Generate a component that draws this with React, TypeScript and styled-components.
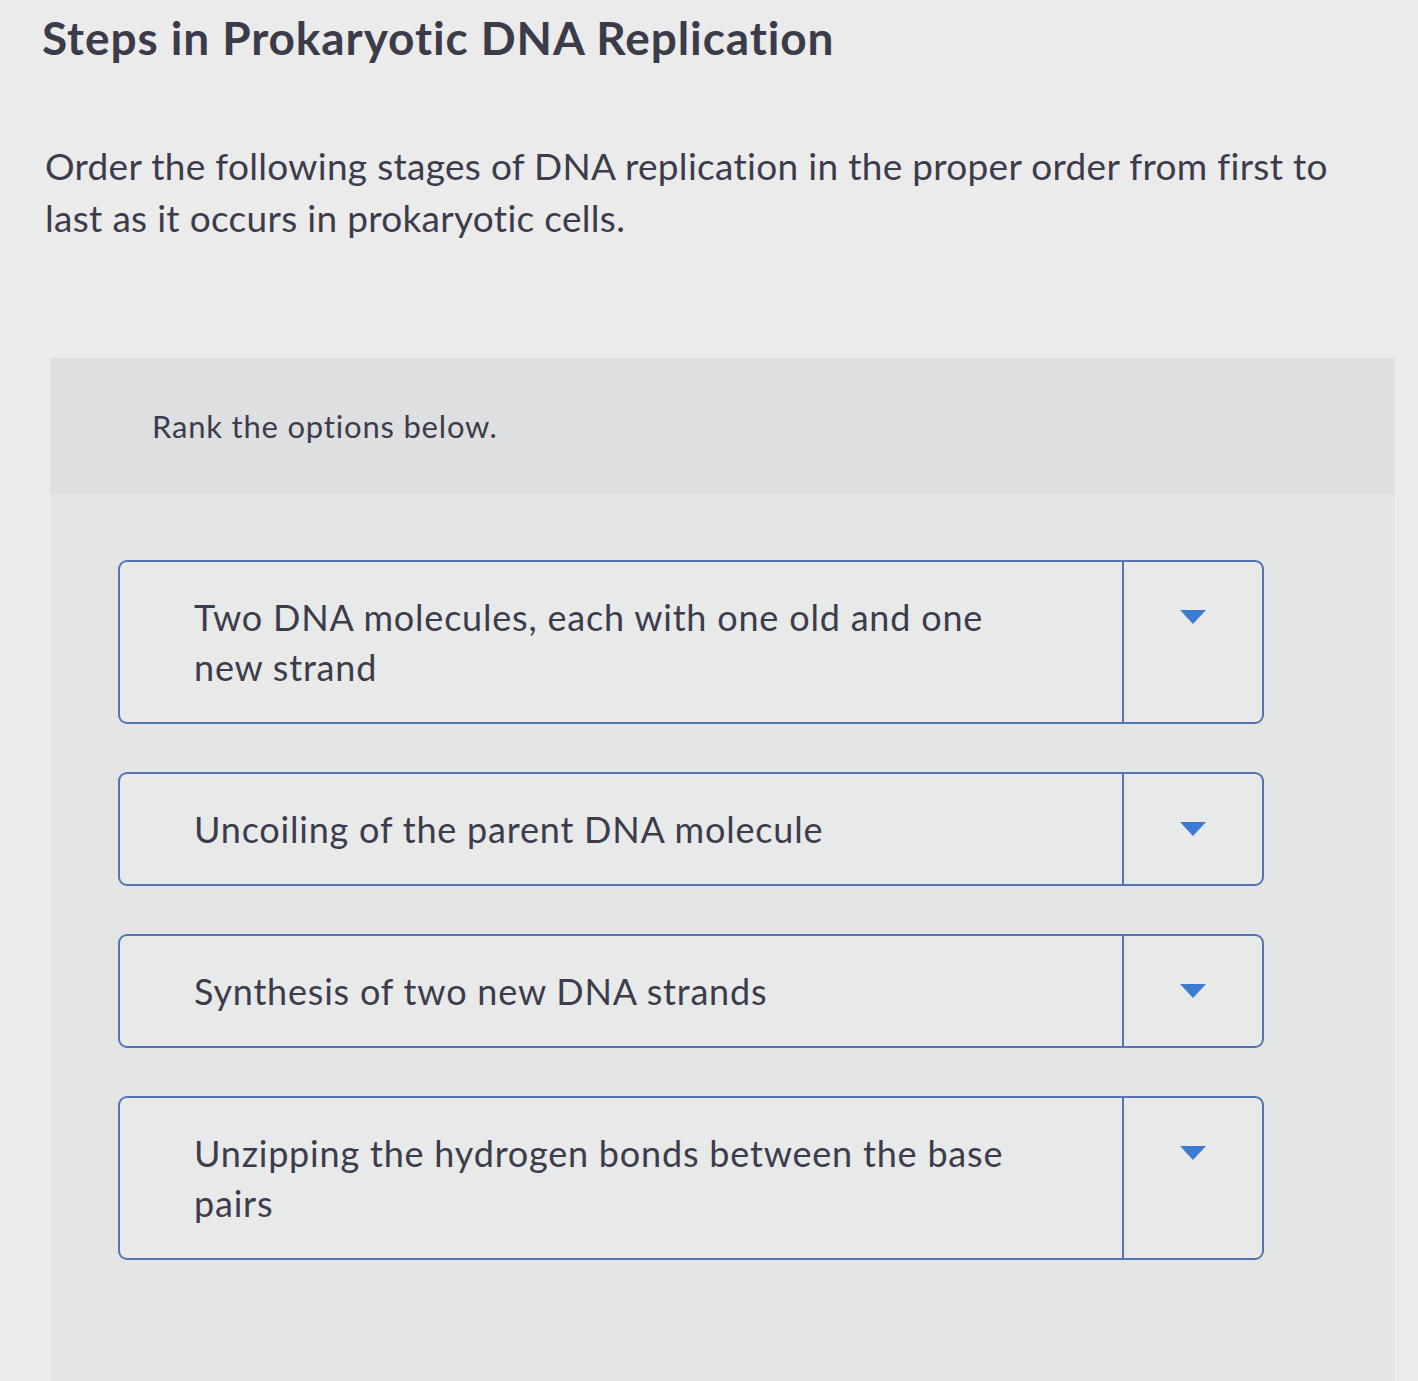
import styled, { createGlobalStyle } from 'styled-components';

interface RankItem {
  id: string;
  label: string;
}

const items: RankItem[] = [
  { id: 'a', label: 'Two DNA molecules, each with one old and one new strand' },
  { id: 'b', label: 'Uncoiling of the parent DNA molecule' },
  { id: 'c', label: 'Synthesis of two new DNA strands' },
  { id: 'd', label: 'Unzipping the hydrogen bonds between the base pairs' },
];

const GlobalStyle = createGlobalStyle`
  html, body {
    margin: 0;
    padding: 0;
    background: #eaebea;
  }
  body {
    font-family: Lato, "Open Sans", "Liberation Sans", sans-serif;
    color: #3c3c4c;
  }
`;

const App = () => {
  return (
    <>
      <GlobalStyle />
      <Page>
        <Title>Steps in Prokaryotic DNA Replication</Title>
        <Prompt>
          Order the following stages of DNA replication in the proper order from first to
          last as it occurs in prokaryotic cells.
        </Prompt>
        <Panel>
          <PanelHeader>Rank the options below.</PanelHeader>
          <RankList>
            {items.map((item) => (
              <RankRow key={item.id}>
                <RankLabel>{item.label}</RankLabel>
                <RankSelect aria-label="rank">
                  <Caret viewBox="0 0 26 14">
                    <path d="M0 0 H26 L13 14 Z" fill="#3c7bd2" />
                  </Caret>
                </RankSelect>
              </RankRow>
            ))}
          </RankList>
        </Panel>
      </Page>
    </>
  );
};

export default App;

const Page = styled.div`
  min-height: 1381px;
  padding: 10px 0 0 42px;
  box-sizing: border-box;
`;

const Title = styled.h1`
  margin: 0;
  font-size: 46px;
  font-weight: 700;
  line-height: 56px;
  color: #3b3b4a;
  letter-spacing: 0.9px;
`;

const Prompt = styled.p`
  margin: 74px 0 0 3px;
  width: 1320px;
  font-size: 37px;
  line-height: 52px;
  font-weight: 400;
  letter-spacing: 0.3px;
`;

const Panel = styled.section`
  margin: 114px 0 0 8px;
  width: 1345px;
  min-height: 1032px;
  background: #e4e5e5;
`;

const PanelHeader = styled.div`
  height: 136px;
  padding-left: 102px;
  display: flex;
  align-items: center;
  background: #dedfe0;
  font-size: 31px;
  letter-spacing: 0.8px;
`;

const RankList = styled.div`
  display: flex;
  flex-direction: column;
  gap: 48px;
  margin: 66px 0 0 68px;
  width: 1146px;
`;

const RankRow = styled.div`
  display: flex;
  border: 2px solid #5574b6;
  border-radius: 9px;
  background: #e8e9e9;
`;

const RankLabel = styled.div`
  flex: 1;
  padding: 30px 90px 30px 74px;
  font-size: 36px;
  line-height: 50px;
  letter-spacing: 0.8px;
`;

const RankSelect = styled.div`
  width: 138px;
  border-left: 2px solid #5574b6;
  display: flex;
  justify-content: center;
  align-items: flex-start;
  padding-top: 48px;
`;

const Caret = styled.svg`
  width: 26px;
  height: 14px;
`;
